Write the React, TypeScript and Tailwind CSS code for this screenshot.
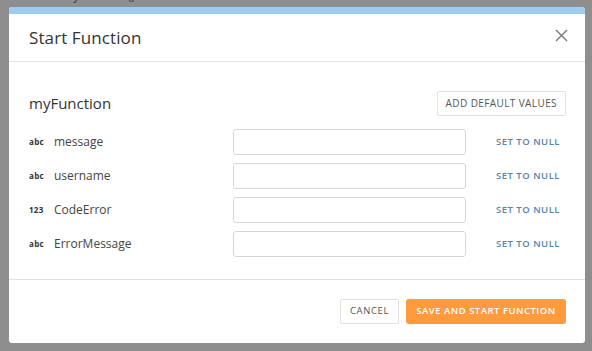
import type {ReactElement} from "react";
import React from "react";

const params = [
    {type: "abc", name: "message"},
    {type: "abc", name: "username"},
    {type: "123", name: "CodeError"},
    {type: "abc", name: "ErrorMessage"},
];

const App = (): ReactElement => {
    return (
        <div className="relative w-[592px] h-[351px] overflow-hidden bg-[#8e8e8e] font-['Open_Sans',sans-serif]">
            {/* page behind the overlay */}
            <div className="h-[7px] overflow-hidden">
                <div className="-mt-[11px] flex gap-[28px] text-[12px] text-[#3a3a3a] leading-[14px]">
                    <span className="-ml-[4px]">Screen</span>
                    <span>myFunction()</span>
                </div>
            </div>

            <div className="ml-[9px] w-[576px] h-[336px] bg-white rounded-[3px] overflow-hidden flex flex-col">
                <div className="h-[7px] bg-[#9ccdee]" />

                <div className="h-[48px] flex items-center justify-between pl-[20px] pr-[17px] border-b border-[#e2e2e2]">
                    <div className="text-[17px] text-[#333] tracking-[0.1px]">Start Function</div>
                    <svg width="13" height="13" viewBox="0 0 13 13" className="-mt-[4px]">
                        <path d="M1 1L12 12M12 1L1 12" stroke="#777" strokeWidth="1.4" />
                    </svg>
                </div>

                <div className="flex-1 flex flex-col pt-[29px] pl-[20px] pr-[19px] border-b border-[#e2e2e2]">
                    <div className="flex items-center justify-between h-[25px]">
                        <div className="text-[15px] text-[#333]">myFunction</div>
                        <button className="h-[25px] px-[8px] border border-[#e0e0e0] rounded-[2px] text-[10px] tracking-[0.4px] text-[#555]">
                            ADD DEFAULT VALUES
                        </button>
                    </div>
                    <div className="mt-[13px] flex flex-col gap-[8px]">
                        {params.map(p => (
                            <div key={p.name} className="flex items-center h-[26px]">
                                <span className="w-[25px] text-[8px] font-bold text-[#333] tracking-[0.3px]">{p.type}</span>
                                <span className="w-[179px] text-[12px] text-[#444]">{p.name}</span>
                                <input className="w-[233px] h-[26px] border border-[#d6d6d6] rounded-[3px] outline-none" />
                                <span className="ml-[30px] text-[9.5px] font-semibold tracking-[0.5px] text-[#5485ab]">SET TO NULL</span>
                            </div>
                        ))}
                    </div>
                </div>

                <div className="h-[63px] flex items-center justify-end gap-[7px] pr-[19px]">
                    <button className="h-[25px] w-[59px] border border-[#e0e0e0] rounded-[2px] text-[9.5px] tracking-[0.6px] text-[#555]">
                        CANCEL
                    </button>
                    <button className="h-[25px] w-[160px] bg-[#ff9a3d] rounded-[3px] text-[9.5px] font-semibold tracking-[0.5px] text-white">
                        SAVE AND START FUNCTION
                    </button>
                </div>
            </div>
        </div>
    );
};

export default App;
